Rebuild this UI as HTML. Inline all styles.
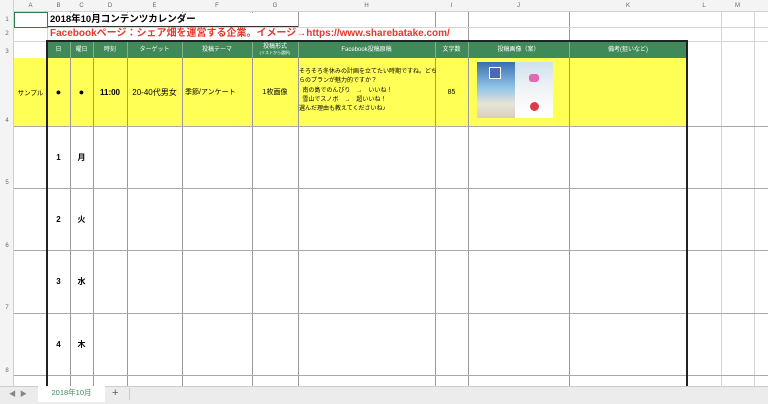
<!DOCTYPE html>
<html><head><meta charset="utf-8"><style>
*{margin:0;padding:0;box-sizing:border-box}
body{width:768px;height:404px;overflow:hidden;background:#fff;position:relative;font-family:"Liberation Sans","Noto Sans CJK JP",sans-serif;color:#000}
.a{position:absolute}
.v{position:absolute;width:1px;background:#d6d6d6}
.h{position:absolute;height:1px;background:#d6d6d6}
.ch{position:absolute;top:0;height:12px;font-size:6px;color:#666;text-align:center;line-height:12px}
.rh{position:absolute;left:0;width:14px;font-size:6px;color:#666;text-align:center}
.gh{position:absolute;top:41px;height:17px;color:#fff;font-size:6px;display:flex;align-items:center;justify-content:center;text-align:center;line-height:6px}
.c{position:absolute;display:flex;align-items:center;justify-content:center;font-size:8px}
</style></head><body>
<div class="a" style="left:0;top:0;width:768px;height:12px;background:#f4f4f4;border-bottom:1px solid #d0d0d0"></div>
<div class="a" style="left:0;top:0;width:14px;height:386px;background:#f4f4f4;border-right:1px solid #d0d0d0"></div>
<div class="ch" style="left:14px;width:33px">A</div><div class="ch" style="left:47px;width:23px">B</div><div class="ch" style="left:70px;width:23px">C</div><div class="ch" style="left:93px;width:34px">D</div><div class="ch" style="left:127px;width:55px">E</div><div class="ch" style="left:182px;width:70px">F</div><div class="ch" style="left:252px;width:46px">G</div><div class="ch" style="left:298px;width:137px">H</div><div class="ch" style="left:435px;width:33px">I</div><div class="ch" style="left:468px;width:101px">J</div><div class="ch" style="left:569px;width:118px">K</div><div class="ch" style="left:687px;width:34px">L</div><div class="ch" style="left:721px;width:33px">M</div>
<div class="rh" style="top:17px">1</div><div class="rh" style="top:31px">2</div><div class="rh" style="top:49px">3</div><div class="rh" style="top:118px">4</div><div class="rh" style="top:180px">5</div><div class="rh" style="top:243px">6</div><div class="rh" style="top:305px">7</div><div class="rh" style="top:368px">8</div>
<div class="v" style="left:47px;top:12px;height:374px"></div><div class="v" style="left:70px;top:12px;height:374px;background:#999"></div><div class="v" style="left:93px;top:12px;height:374px;background:#999"></div><div class="v" style="left:127px;top:12px;height:374px;background:#999"></div><div class="v" style="left:182px;top:12px;height:374px;background:#999"></div><div class="v" style="left:252px;top:12px;height:374px;background:#999"></div><div class="v" style="left:298px;top:12px;height:374px;background:#999"></div><div class="v" style="left:435px;top:12px;height:374px;background:#999"></div><div class="v" style="left:468px;top:12px;height:374px;background:#999"></div><div class="v" style="left:569px;top:12px;height:374px;background:#999"></div><div class="v" style="left:721px;top:12px;height:374px"></div><div class="v" style="left:754px;top:12px;height:374px"></div>
<div class="h" style="left:14px;top:27px;width:754px"></div><div class="h" style="left:14px;top:41px;width:754px"></div>
<div class="h" style="left:14px;top:126px;width:754px;background:#aaa"></div><div class="h" style="left:14px;top:188px;width:754px;background:#aaa"></div><div class="h" style="left:14px;top:250px;width:754px;background:#aaa"></div><div class="h" style="left:14px;top:313px;width:754px;background:#aaa"></div><div class="h" style="left:14px;top:375px;width:754px;background:#aaa"></div>
<div class="a" style="left:14px;top:12px;width:34px;height:16px;border:1px solid #2f7d4a"></div>
<div class="a" style="left:48px;top:13px;width:250px;height:14px;background:#fff;border-bottom:1px solid #333"></div>
<div class="a" style="left:50px;top:13px;font-size:9.5px;font-weight:bold;line-height:14px">2018年10月コンテンツカレンダー</div>
<div class="a" style="left:48px;top:28px;width:420px;height:13px;background:#fff"></div>
<div class="a" style="left:50px;top:27px;font-size:10px;font-weight:bold;color:#e8372c;line-height:14px;white-space:nowrap">Facebookページ：シェア畑を運営する企業。イメージ→https://www.sharebatake.com/</div>
<div class="a" style="left:47px;top:41px;width:640px;height:17px;background:#3e8a58"></div>
<div class="gh" style="left:47px;width:23px">日</div><div class="gh" style="left:70px;width:23px">曜日</div><div class="gh" style="left:93px;width:34px">時刻</div><div class="gh" style="left:127px;width:55px">ターゲット</div><div class="gh" style="left:182px;width:70px">投稿テーマ</div><div class="gh" style="left:252px;width:46px;flex-direction:column">投稿形式<span style="font-size:4px;line-height:5px">(リストから選択)</span></div><div class="gh" style="left:298px;width:137px">Facebook投稿原稿</div><div class="gh" style="left:435px;width:33px">文字数</div><div class="gh" style="left:468px;width:101px">投稿画像（案）</div><div class="gh" style="left:569px;width:118px">備考(狙いなど)</div>
<div class="v" style="left:70px;top:41px;height:17px;background:#7fb08f"></div><div class="v" style="left:93px;top:41px;height:17px;background:#7fb08f"></div><div class="v" style="left:127px;top:41px;height:17px;background:#7fb08f"></div><div class="v" style="left:182px;top:41px;height:17px;background:#7fb08f"></div><div class="v" style="left:252px;top:41px;height:17px;background:#7fb08f"></div><div class="v" style="left:298px;top:41px;height:17px;background:#7fb08f"></div><div class="v" style="left:435px;top:41px;height:17px;background:#7fb08f"></div><div class="v" style="left:468px;top:41px;height:17px;background:#7fb08f"></div><div class="v" style="left:569px;top:41px;height:17px;background:#7fb08f"></div>
<div class="a" style="left:14px;top:58px;width:673px;height:68px;background:#ffff55"></div>
<div class="v" style="left:70px;top:58px;height:68px;background:#999"></div><div class="v" style="left:93px;top:58px;height:68px;background:#999"></div><div class="v" style="left:127px;top:58px;height:68px;background:#999"></div><div class="v" style="left:182px;top:58px;height:68px;background:#999"></div><div class="v" style="left:252px;top:58px;height:68px;background:#999"></div><div class="v" style="left:298px;top:58px;height:68px;background:#999"></div><div class="v" style="left:435px;top:58px;height:68px;background:#999"></div><div class="v" style="left:468px;top:58px;height:68px;background:#999"></div><div class="v" style="left:569px;top:58px;height:68px;background:#999"></div>
<div class="c" style="left:14px;top:58px;width:33px;height:68px;font-size:6.5px">サンプル</div>
<div class="c" style="left:47px;top:58px;width:23px;height:68px;font-size:9px">●</div><div class="c" style="left:70px;top:58px;width:23px;height:68px;font-size:9px">●</div>
<div class="c" style="left:93px;top:58px;width:34px;height:68px;font-weight:bold">11:00</div>
<div class="c" style="left:127px;top:58px;width:55px;height:68px">20-40代男女</div>
<div class="c" style="left:182px;top:58px;width:70px;height:68px;justify-content:flex-start;padding-left:3px;font-size:7px">季節/アンケート</div>
<div class="c" style="left:252px;top:58px;width:46px;height:68px;font-size:7px">1枚画像</div>
<div class="a" style="left:299px;top:68px;width:136px;font-size:6px;line-height:9.3px;white-space:nowrap">そろそろ冬休みの計画を立てたい時期ですね。どち<br>らのプランが魅力的ですか？<br>&nbsp;&nbsp;南の島でのんびり　→　いいね！<br>&nbsp;&nbsp;雪山でスノボ　→　超いいね！<br>選んだ理由も教えてくださいね♪</div>
<div class="c" style="left:435px;top:58px;width:33px;height:68px;font-size:7px">85</div>
<div class="a" style="left:477px;top:62px;width:38px;height:56px;background:linear-gradient(#3a6fb0,#8fc3e8 45%,#e8e4d8 75%,#d8cfc0)"></div>
<div class="a" style="left:515px;top:62px;width:38px;height:56px;background:linear-gradient(#cfe0ee,#f2f4f6 50%,#fff)"></div>
<div class="a" style="left:489px;top:67px;width:12px;height:12px;background:#4a6ab4;border:1px solid #fff"></div>
<div class="a" style="left:529px;top:74px;width:10px;height:8px;background:#e46ab0;border-radius:3px"></div>
<div class="a" style="left:529px;top:101px;width:11px;height:11px;background:#fff"></div>
<div class="a" style="left:530px;top:102px;width:9px;height:9px;background:#dd3a4a;border-radius:50%"></div>
<div class="c" style="left:47px;top:126px;width:23px;height:62px;font-weight:bold">1</div><div class="c" style="left:70px;top:126px;width:23px;height:62px;font-weight:bold">月</div>
<div class="c" style="left:47px;top:188px;width:23px;height:62px;font-weight:bold">2</div><div class="c" style="left:70px;top:188px;width:23px;height:62px;font-weight:bold">火</div>
<div class="c" style="left:47px;top:250px;width:23px;height:63px;font-weight:bold">3</div><div class="c" style="left:70px;top:250px;width:23px;height:63px;font-weight:bold">水</div>
<div class="c" style="left:47px;top:313px;width:23px;height:62px;font-weight:bold">4</div><div class="c" style="left:70px;top:313px;width:23px;height:62px;font-weight:bold">木</div>
<div class="a" style="left:46px;top:40px;width:642px;height:350px;border:2px solid #222;border-bottom:none"></div>
<div class="a" style="left:0;top:386px;width:768px;height:18px;background:#ececec;border-top:1px solid #ccc"></div>
<div class="a" style="left:9px;top:389px;font-size:7px;color:#888">◀&nbsp;&nbsp;▶</div>
<div class="a" style="left:38px;top:386px;width:67px;height:16px;background:#fff;font-size:7.5px;color:#3e8a58;text-align:center;line-height:14px">2018年10月</div>
<div class="a" style="left:112px;top:386px;font-size:11px;color:#555;line-height:15px">+</div>
<div class="a" style="left:129px;top:388px;width:1px;height:12px;background:#ccc"></div>
</body></html>
